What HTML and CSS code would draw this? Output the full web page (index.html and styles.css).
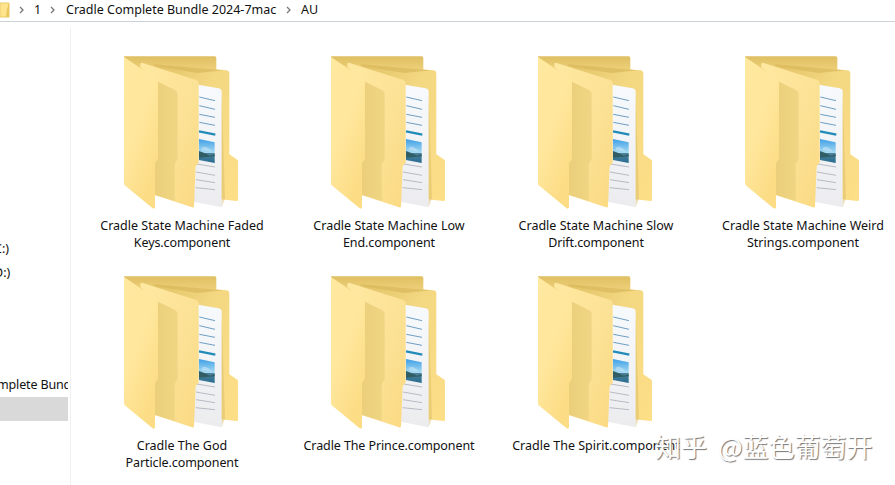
FILE: index.html
```html
<!DOCTYPE html>
<html lang="en">
<head>
<meta charset="utf-8">
<title>AU</title>
<link rel="stylesheet" href="styles.css">
</head>
<body>
<svg class="defs" aria-hidden="true">
  <defs>
    <linearGradient id="back" x1="0" y1="0" x2="0" y2="1"><stop offset="0" stop-color="#dfbf62"/><stop offset=".35" stop-color="#ebcd76"/><stop offset="1" stop-color="#eacb70"/></linearGradient>
    <linearGradient id="tab" x1="0" y1="0" x2="1" y2="1"><stop offset="0" stop-color="#e2c266"/><stop offset=".4" stop-color="#f3d781"/><stop offset="1" stop-color="#fddf88"/></linearGradient>
    <linearGradient id="front" x1="0" y1="0" x2=".6" y2="1"><stop offset="0" stop-color="#ffe89f"/><stop offset=".5" stop-color="#ffe79d"/><stop offset="1" stop-color="#fcdc84"/></linearGradient>
    <linearGradient id="mid" x1="0" y1="0" x2="1" y2="1"><stop offset="0" stop-color="#ffe8a1"/><stop offset=".6" stop-color="#fbe194"/><stop offset="1" stop-color="#fbd981"/></linearGradient>
    <linearGradient id="shade" x1="0" y1="0" x2="1" y2="0"><stop offset="0" stop-color="#ebcf7b"/><stop offset="1" stop-color="#f0d584"/></linearGradient>
    <linearGradient id="paper" x1="0" y1="0" x2="0" y2="1"><stop offset="0" stop-color="#f7fafc"/><stop offset="1" stop-color="#ececef"/></linearGradient>
    <linearGradient id="sky" x1="0" y1="0" x2="0" y2="1"><stop offset="0" stop-color="#3fa0e6"/><stop offset=".58" stop-color="#a9dbf3"/><stop offset=".6" stop-color="#4d8199"/><stop offset="1" stop-color="#286c91"/></linearGradient>
    <symbol id="folder" viewBox="0 0 432 510">
      <path d="M42 34H314Q319 34 319 39V130H130L42 36Z" fill="url(#back)"/>
      <path d="M130 58L349 76Q358 77 358 87V328L382 344Q384 346 384 350V464Q384 469 379 468L250 454Z" fill="url(#tab)"/>
      <path d="M130 58L340 76L263 84L150 66Z" fill="#d9b95c" opacity=".75"/>
      <path d="M264 119L326 130Q335 132 335 140V487L250 470Z" fill="url(#paper)"/>
      <path d="M335 150L345 460L335 486Z" fill="#d6b967" opacity=".45"/>
      <g fill="none" stroke="#5f94bd" stroke-width="2.7"><path d="M268 156L315 167M268 182L315 193M268 208L315 217M268 232L315 241"/></g>
      <path d="M267 259L316 269" stroke="#238bb8" stroke-width="7"/>
      <path d="M267 282L314 292V354L267 345Z" fill="url(#sky)"/>
      <path d="M267 318Q285 324 300 332L314 328V334L267 338Z" fill="#315e65"/>
      <path d="M278 306Q290 302 306 320L274 315Z" fill="#dceff6" opacity=".45"/>
      <path d="M260 357L315 366M258 381L315 391M258 404L315 413M257 428L315 434" fill="none" stroke="#a9a9b4" stroke-width="2.3"/>
      <path d="M91 58Q92 52 98 54L257 104Q266 107 266 115V353L257 364L252 484Q251 489 246 487L134 450V106L91 66Z" fill="url(#mid)"/>
      <path d="M135 106L195 135Q203 139 203 147V342L194 358V468L135 450Z" fill="url(#shade)"/>
      <path d="M42 36L131 96Q144 105 144 113V341L135 354V487Q134 493 128 490L44 421Q42 419 42 414Z" fill="url(#front)"/>
    </symbol>
  </defs>
</svg>
<div class="window">
  <header class="path">
    <span class="mini"><svg viewBox="0 0 12 20"><path d="M0 3H9V17H0Z" fill="#ffe48e" stroke="#e9ca68"/><path d="M6 17L7 9L9 3V17Z" fill="#ebc65b"/></svg></span>
    <svg class="chev" viewBox="0 0 6 8"><path d="M1 1L4 4L1 7"/></svg>
    <span class="c1">1</span>
    <svg class="chev" viewBox="0 0 6 8"><path d="M1 1L4 4L1 7"/></svg>
    <span class="c2">Cradle Complete Bundle 2024-7mac</span>
    <svg class="chev" viewBox="0 0 6 8"><path d="M1 1L4 4L1 7"/></svg>
    <span class="c3">AU</span>
  </header>
  <div class="body">
    <nav class="side">
      <div class="drive c">C:)</div>
      <div class="drive d">D:)</div>
      <div class="tree">mplete Bundle</div>
      <div class="selected"></div>
    </nav>
    <main class="files">
      <div class="file"><svg><use href="#folder"/></svg><p>Cradle State Machine Faded<br><span class="tight">Keys.component</span></p></div>
      <div class="file"><svg><use href="#folder"/></svg><p>Cradle State Machine Low<br><span class="tight">End.component</span></p></div>
      <div class="file"><svg><use href="#folder"/></svg><p>Cradle State Machine Slow<br><span class="tight">Drift.component</span></p></div>
      <div class="file"><svg><use href="#folder"/></svg><p>Cradle State Machine Weird<br>Strings.component</p></div>
      <div class="file"><svg><use href="#folder"/></svg><p>Cradle The God<br><span class="tight">Particle.component</span></p></div>
      <div class="file"><svg><use href="#folder"/></svg><p class="tight">Cradle The Prince.component</p></div>
      <div class="file"><svg><use href="#folder"/></svg><p>Cradle The Spirit.component</p></div>
    </main>
  </div>
  <div class="watermark"><span>知乎</span><span>@蓝色葡萄开</span></div>
</div>
</body>
</html>
```
FILE: styles.css
```css
* { box-sizing: border-box; }
body { margin: 0; background: #fff; color: #111; font: 12.5px/17px "Noto Sans", "Noto Sans CJK SC", sans-serif; }
.defs { position: absolute; width: 0; height: 0; }
.window { position: relative; width: 895px; height: 485px; overflow: hidden; }
.path { display: flex; align-items: center; height: 22px; padding-bottom: 2px; border-bottom: 1px solid #ccd3d8; white-space: nowrap; }
.mini { width: 19px; height: 20px; }
.mini svg { display: block; width: 12px; height: 20px; }
.chev { width: 6px; height: 8px; flex: none; fill: none; stroke: #777; stroke-width: 1.3; }
.c1 { width: 16px; margin-left: 9px; }
.c2 { width: 220px; margin-left: 10px; }
.c3 { margin-left: 9px; }
.body { display: flex; height: 463px; }
.side { width: 71px; flex: none; margin-top: 6px; border-right: 1px solid #f0f0f0; overflow: hidden; white-space: nowrap; }
.drive { height: 24px; }
.c { margin: 212px 0 0 -6px; }
.d { margin-left: -6px; }
.tree { width: 68px; height: 21px; margin-top: 88px; overflow: hidden; text-indent: -3px; letter-spacing: -.15px; }
.selected { width: 68px; height: 24px; background: #d9d9d9; }
.files { display: grid; grid-template-columns: repeat(4, 207px); grid-auto-rows: 220px; padding: 23px 0 0 7.5px; }
.file { display: flex; flex-direction: column; align-items: center; }
.file svg { display: block; width: 144px; height: 170px; flex: none; }
.file p { margin: 2px 0 0; text-align: center; white-space: nowrap; }
.tight { letter-spacing: -.1px; }
.watermark { position: absolute; left: 655px; top: 428px; display: flex; gap: 11px; color: #fff; font: 26px/36px "Noto Sans CJK SC", sans-serif; white-space: nowrap; text-shadow: 1px 1px 1px #777; }
```
